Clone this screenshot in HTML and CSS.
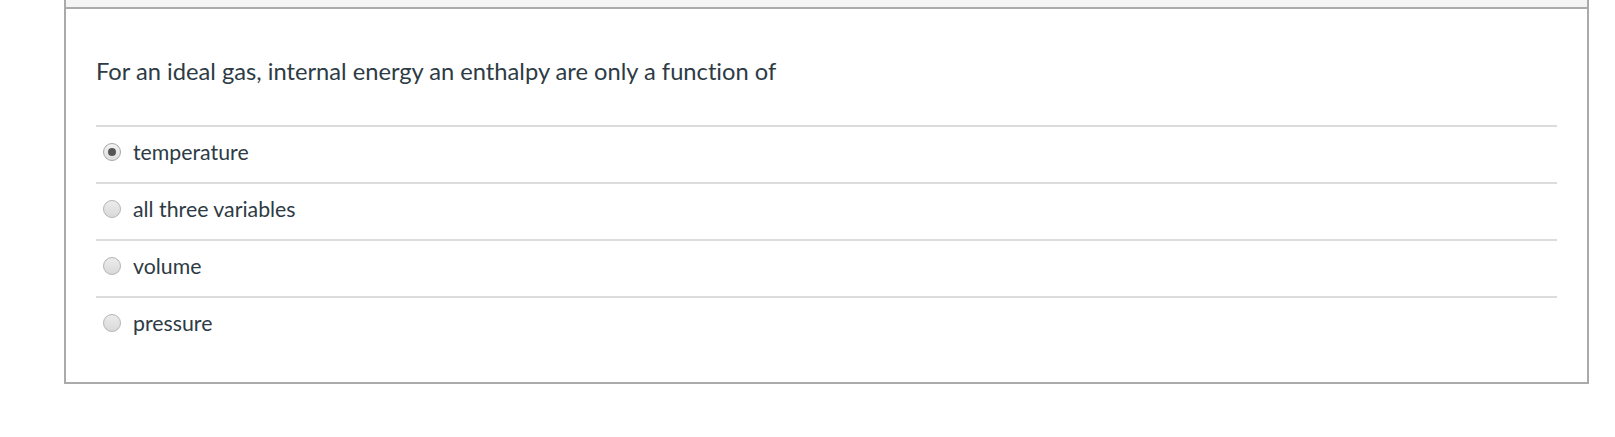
FILE: index.html
```html
<!DOCTYPE html>
<html lang="en">
<head>
    <meta charset="UTF-8">
    <meta name="viewport" content="width=device-width, initial-scale=1.0">
    <title>Quiz Question</title>
    <link rel="stylesheet" href="styles.css">
</head>
<body>
    <div class="question">
        <div class="question-header"></div>
        <div class="question-body">
            <p class="question-text">For an ideal gas, internal energy an enthalpy are only a function of</p>
            <div class="answers">
                <label class="answer">
                    <input type="radio" name="q1" class="radio" checked>
                    <span class="answer-text">temperature</span>
                </label>
                <label class="answer">
                    <input type="radio" name="q1" class="radio">
                    <span class="answer-text">all three variables</span>
                </label>
                <label class="answer">
                    <input type="radio" name="q1" class="radio">
                    <span class="answer-text">volume</span>
                </label>
                <label class="answer">
                    <input type="radio" name="q1" class="radio">
                    <span class="answer-text">pressure</span>
                </label>
            </div>
        </div>
    </div>
</body>
</html>
```

FILE: styles.css
```css
body {
    margin: 0;
    font-family: Lato, "Open Sans", sans-serif;
    font-variant-ligatures: none;
    color: #2d3b45;
    background: #fff;
}

.question {
    width: 1521px;
    margin-left: 64px;
    border: 2px solid #aaa;
    border-top: none;
}

.question-header {
    height: 7px;
    background: #f4f4f4;
    border-bottom: 2px solid #aaa;
}

.question-body {
    padding: 44px 30px 29px 30px;
}

.question-text {
    margin: 0 0 36px 0;
    font-size: 23.7px;
    line-height: 36px;
}

.answer {
    display: flex;
    align-items: center;
    height: 50px;
    padding-bottom: 5px;
    border-top: 2px solid #dcdcdc;
    cursor: pointer;
}

.radio {
    appearance: none;
    -webkit-appearance: none;
    width: 18px;
    height: 18px;
    margin: 0 12px 0 7px;
    border: 1px solid #b4b4b4;
    border-radius: 50%;
    background: linear-gradient(#ececec, #d9d9d9);
    position: relative;
}

.radio:checked {
    border-color: #a8a8a8;
    background: linear-gradient(#f2f2f2, #dedede);
}

.radio:checked::after {
    content: "";
    position: absolute;
    top: 4px;
    left: 4px;
    width: 8px;
    height: 8px;
    border-radius: 50%;
    background: #555;
}

.answer-text {
    font-size: 21.3px;
}
```
